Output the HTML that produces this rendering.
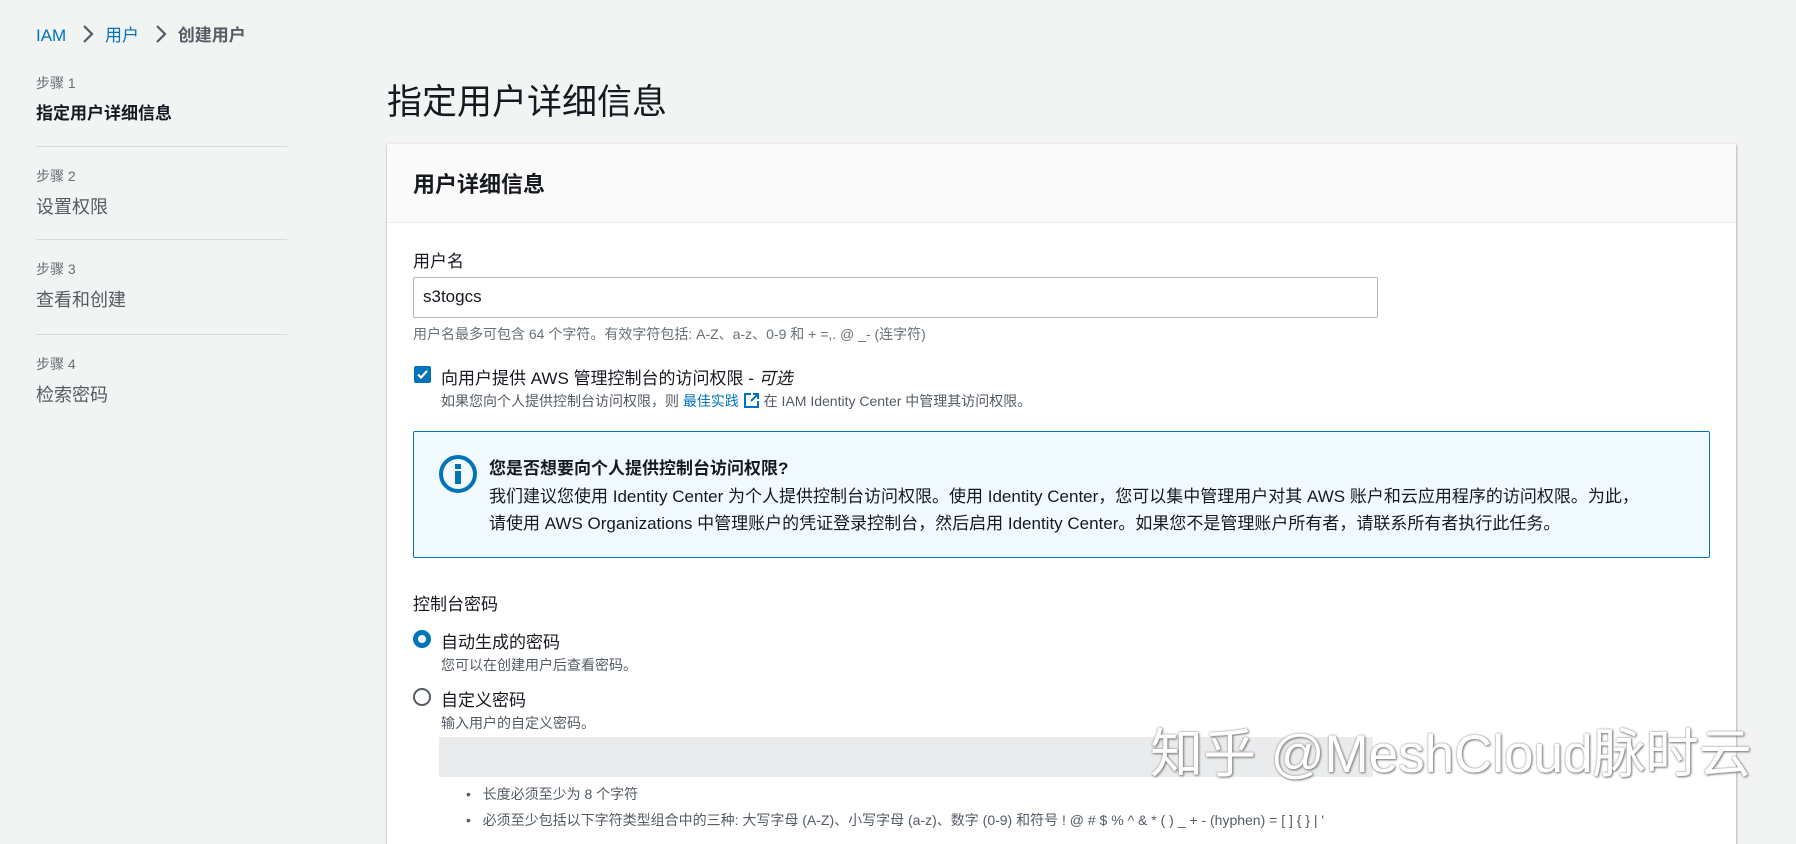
<!DOCTYPE html>
<html><head><meta charset="utf-8"><style>
*{box-sizing:border-box;margin:0;padding:0}
body{width:1796px;height:822px;overflow:hidden;background:#f2f3f3;font-family:"Liberation Sans","Noto Sans CJK SC",sans-serif;color:#16191f;position:relative}
.a{position:absolute;white-space:nowrap}
.lk{color:#0073bb}
.sm{font-size:14px;color:#687078}
.div{position:absolute;left:36px;width:251px;height:1px;background:#d5dbdb}
</style></head><body>
<div class="a" style="left:36px;top:21px;font-size:17px"><span class="lk">IAM</span>
<svg width="16" height="20" viewBox="0 0 16 20" style="margin:0 9px;vertical-align:-3px"><path d="M4 2l8 8-8 8" fill="none" stroke="#545b64" stroke-width="2.2"/></svg><span class="lk">用户</span>
<svg width="16" height="20" viewBox="0 0 16 20" style="margin:0 9px;vertical-align:-3px"><path d="M4 2l8 8-8 8" fill="none" stroke="#545b64" stroke-width="2.2"/></svg><b style="color:#545b64">创建用户</b></div>

<div class="a sm" style="left:36px;top:73px">步骤 1</div>
<div class="a" style="left:36px;top:99px;font-size:17px;font-weight:bold">指定用户详细信息</div>
<div class="div" style="top:146px"></div>
<div class="a sm" style="left:36px;top:166px">步骤 2</div>
<div class="a" style="left:36px;top:193px;font-size:18px;color:#545b64">设置权限</div>
<div class="div" style="top:239px"></div>
<div class="a sm" style="left:36px;top:259px">步骤 3</div>
<div class="a" style="left:36px;top:286px;font-size:18px;color:#545b64">查看和创建</div>
<div class="div" style="top:334px"></div>
<div class="a sm" style="left:36px;top:354px">步骤 4</div>
<div class="a" style="left:36px;top:381px;font-size:18px;color:#545b64">检索密码</div>

<div class="a" style="left:387px;top:74px;font-size:35px;color:#16191f">指定用户详细信息</div>

<div class="a" style="left:387px;top:144px;width:1349px;height:700px;background:#fff;box-shadow:0 1px 2px rgba(0,28,36,.3),1px 1px 2px rgba(0,28,36,.15)">
 <div style="height:79px;background:#fafafa;border-bottom:1px solid #eaeded"></div>
</div>
<div class="a" style="left:413px;top:167px;font-size:22px;font-weight:bold">用户详细信息</div>
<div class="a" style="left:413px;top:247px;font-size:17px">用户名</div>
<div class="a" style="left:413px;top:277px;width:965px;height:41px;border:1px solid #aab7b8;border-radius:2px;background:#fff;font-size:17px;padding:9px 0 0 9px">s3togcs</div>
<div class="a sm" style="left:413px;top:324px">用户名最多可包含 64 个字符。有效字符包括: A-Z、a-z、0-9 和 + =,. @ _- (连字符)</div>

<div class="a" style="left:414px;top:366px;width:17px;height:17px;background:#0073bb;border-radius:2px"><svg width="17" height="17" viewBox="0 0 17 17"><path d="M4 8.5l3 3 6-6.5" fill="none" stroke="#fff" stroke-width="2.2"/></svg></div>
<div class="a" style="left:441px;top:364px;font-size:17px">向用户提供 AWS 管理控制台的访问权限 - <i>可选</i></div>
<div class="a sm" style="left:441px;top:391px;color:#545b64">如果您向个人提供控制台访问权限，则 <span class="lk">最佳实践</span> <svg width="17" height="17" viewBox="0 0 17 17" style="vertical-align:-3px"><path d="M8 2H2v13h13V9" fill="none" stroke="#0073bb" stroke-width="2"/><path d="M10 2h5v5M15 2L8 9" fill="none" stroke="#0073bb" stroke-width="2"/></svg> 在 IAM Identity Center 中管理其访问权限。</div>

<div class="a" style="left:413px;top:431px;width:1297px;height:127px;background:#f1faff;border:1px solid #0073bb;border-radius:2px"></div>
<svg class="a" style="left:438px;top:454px" width="40" height="40" viewBox="0 0 40 40"><circle cx="20" cy="20" r="17" fill="none" stroke="#0073bb" stroke-width="4"/><rect x="17" y="17" width="6" height="13" fill="#0073bb"/><rect x="17" y="10" width="6" height="5" fill="#0073bb"/></svg>
<div class="a" style="left:489px;top:454px;font-size:17px;font-weight:bold">您是否想要向个人提供控制台访问权限?</div>
<div class="a" style="left:489px;top:482px;font-size:17px">我们建议您使用 Identity Center 为个人提供控制台访问权限。使用 Identity Center，您可以集中管理用户对其 AWS 账户和云应用程序的访问权限。为此，</div>
<div class="a" style="left:489px;top:509px;font-size:17px">请使用 AWS Organizations 中管理账户的凭证登录控制台，然后启用 Identity Center。如果您不是管理账户所有者，请联系所有者执行此任务。</div>

<div class="a" style="left:413px;top:590px;font-size:17px">控制台密码</div>
<div class="a" style="left:413px;top:630px;width:18px;height:18px;border-radius:50%;border:5px solid #0073bb;background:#fff"></div>
<div class="a" style="left:441px;top:628px;font-size:17px">自动生成的密码</div>
<div class="a sm" style="left:441px;top:655px;color:#545b64">您可以在创建用户后查看密码。</div>
<div class="a" style="left:413px;top:688px;width:18px;height:18px;border-radius:50%;border:2px solid #545b64;background:#fff"></div>
<div class="a" style="left:441px;top:686px;font-size:17px">自定义密码</div>
<div class="a sm" style="left:441px;top:713px;color:#545b64">输入用户的自定义密码。</div>
<div class="a" style="left:439px;top:737px;width:934px;height:40px;background:#e9ebed"></div>
<div class="a sm" style="left:466px;top:784px;color:#545b64">•&nbsp;&nbsp;&nbsp;长度必须至少为 8 个字符</div>
<div class="a sm" style="left:466px;top:810px;color:#545b64">•&nbsp;&nbsp;&nbsp;必须至少包括以下字符类型组合中的三种: 大写字母 (A-Z)、小写字母 (a-z)、数字 (0-9) 和符号 ! @ # $ % ^ &amp; * ( ) _ + - (hyphen) = [ ] { } | '</div>

<div class="a" style="left:1150px;top:712px;font-size:53px;color:#fff;text-shadow:0 0 2px #888,1px 1px 2px #777">知乎 @MeshCloud脉时云</div>
</body></html>
